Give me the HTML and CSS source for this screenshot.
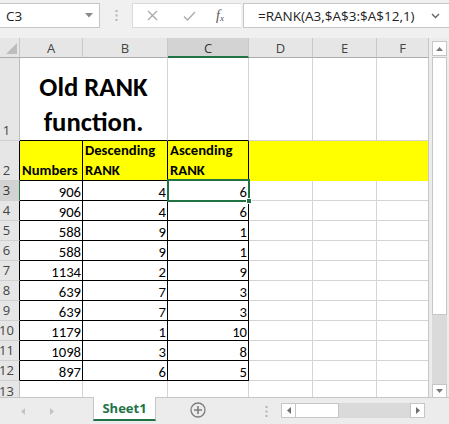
FILE: index.html
```html
<!DOCTYPE html>
<html>
<head>
<meta charset="utf-8">
<link rel="stylesheet" href="styles.css">
</head>
<body>
<div class="app">
  <div class="fbar">
    <div class="namebox"><span>C3</span><svg class="caret" width="8" height="5" viewBox="0 0 8 5"><path d="M0 0 L8 0 L4 4.5 Z" fill="#8a8a8a"/></svg></div>
    <div class="dots"><svg width="3" height="11" viewBox="0 0 3 11"><rect x="0.5" y="0" width="2" height="2" fill="#b4b4b4"/><rect x="0.5" y="4.5" width="2" height="2" fill="#b4b4b4"/><rect x="0.5" y="9" width="2" height="2" fill="#b4b4b4"/></svg></div>
    <div class="fbtns">
      <span class="ib ix"><svg width="11" height="11" viewBox="0 0 11 11"><path d="M1 1 L10 10 M10 1 L1 10" stroke="#a9a9a9" stroke-width="1.3" fill="none"/></svg></span>
      <span class="ib ick"><svg width="13" height="10" viewBox="0 0 13 10"><path d="M1 5.5 L4.5 9 L12 1" stroke="#a9a9a9" stroke-width="1.3" fill="none"/></svg></span>
      <span class="fx"><i>f</i><sub>x</sub></span>
    </div>
    <div class="formula"><span>=RANK(A3,$A$3:$A$12,1)</span><svg width="9" height="6" viewBox="0 0 9 6"><path d="M1 1 L4.5 4.5 L8 1" stroke="#666" stroke-width="1.4" fill="none"/></svg></div>
  </div>

  <div class="main">
    <div class="sheet">
      <div class="corner"><svg width="11" height="11" viewBox="0 0 11 11"><path d="M11 0 L11 11 L0 11 Z" fill="#bdbdbd"/></svg></div>
      <div class="ch">A</div><div class="ch">B</div><div class="ch sel">C</div><div class="ch">D</div><div class="ch">E</div><div class="ch last">F</div>

      <div class="rh">1</div>
      <div class="c title bkb">Old RANK function.</div>
      <div class="c bkb"></div><div class="c"></div><div class="c"></div><div class="c last"></div>

      <div class="rh bkr">2</div>
      <div class="c hd yl bk">Numbers</div>
      <div class="c hd yl bk">Descending RANK</div>
      <div class="c hd yl bk">Ascending RANK</div>
      <div class="c yl yb"></div><div class="c yl yb"></div><div class="c yl last ybb"></div>

      <div class="rh rsel">3</div>
      <div class="c n bk">906</div><div class="c n bk">4</div><div class="c n bk active">6<span class="selbox"><span class="handle"></span></span></div><div class="c"></div><div class="c"></div><div class="c last"></div>

      <div class="rh bkr">4</div>
      <div class="c n bk">906</div><div class="c n bk">4</div><div class="c n bk">6</div><div class="c"></div><div class="c"></div><div class="c last"></div>

      <div class="rh bkr">5</div>
      <div class="c n bk">588</div><div class="c n bk">9</div><div class="c n bk">1</div><div class="c"></div><div class="c"></div><div class="c last"></div>

      <div class="rh bkr">6</div>
      <div class="c n bk">588</div><div class="c n bk">9</div><div class="c n bk">1</div><div class="c"></div><div class="c"></div><div class="c last"></div>

      <div class="rh bkr">7</div>
      <div class="c n bk">1134</div><div class="c n bk">2</div><div class="c n bk">9</div><div class="c"></div><div class="c"></div><div class="c last"></div>

      <div class="rh bkr">8</div>
      <div class="c n bk">639</div><div class="c n bk">7</div><div class="c n bk">3</div><div class="c"></div><div class="c"></div><div class="c last"></div>

      <div class="rh bkr">9</div>
      <div class="c n bk">639</div><div class="c n bk">7</div><div class="c n bk">3</div><div class="c"></div><div class="c"></div><div class="c last"></div>

      <div class="rh bkr">10</div>
      <div class="c n bk">1179</div><div class="c n bk">1</div><div class="c n bk">10</div><div class="c"></div><div class="c"></div><div class="c last"></div>

      <div class="rh bkr">11</div>
      <div class="c n bk">1098</div><div class="c n bk">3</div><div class="c n bk">8</div><div class="c"></div><div class="c"></div><div class="c last"></div>

      <div class="rh bkr">12</div>
      <div class="c n bk">897</div><div class="c n bk">6</div><div class="c n bk">5</div><div class="c"></div><div class="c"></div><div class="c last"></div>

      <div class="rh r13">13</div>
      <div class="c nb"></div><div class="c nb"></div><div class="c nb"></div><div class="c nb"></div><div class="c nb"></div><div class="c nb last"></div>
    </div>

    <div class="vscroll">
      <div class="sbtn"><svg width="7" height="4" viewBox="0 0 7 4"><path d="M0 4 L7 4 L3.5 0 Z" fill="#7a7a7a"/></svg></div>
      <div class="vthumb"></div>
      <div class="vtrack"></div>
      <div class="sbtn down"><svg width="7" height="4" viewBox="0 0 7 4"><path d="M0 0 L7 0 L3.5 4 Z" fill="#7a7a7a"/></svg></div>
    </div>
  </div>

  <div class="tabbar">
    <span class="nav first"><svg width="4" height="7" viewBox="0 0 4 7"><path d="M4 0 L4 7 L0 3.5 Z" fill="#c4c4c4"/></svg></span>
    <span class="nav second"><svg width="4" height="7" viewBox="0 0 4 7"><path d="M0 0 L0 7 L4 3.5 Z" fill="#c4c4c4"/></svg></span>
    <div class="tab">Sheet1</div>
    <span class="plus"><svg width="16" height="16" viewBox="0 0 16 16"><circle cx="8" cy="8" r="7" stroke="#7d7d7d" stroke-width="1.3" fill="none"/><path d="M8 4 L8 12 M4 8 L12 8" stroke="#7d7d7d" stroke-width="1.6"/></svg></span>
    <span class="tdots"><svg width="3" height="11" viewBox="0 0 3 11"><rect x="0.5" y="0" width="2" height="2" fill="#b4b4b4"/><rect x="0.5" y="4.5" width="2" height="2" fill="#b4b4b4"/><rect x="0.5" y="9" width="2" height="2" fill="#b4b4b4"/></svg></span>
    <div class="hscroll">
      <div class="hbtn"><svg width="4" height="7" viewBox="0 0 4 7"><path d="M4 0 L4 7 L0 3.5 Z" fill="#6f6f6f"/></svg></div>
      <div class="hthumb"></div>
      <div class="htrack"></div>
      <div class="hbtn"><svg width="4" height="7" viewBox="0 0 4 7"><path d="M0 0 L0 7 L4 3.5 Z" fill="#6f6f6f"/></svg></div>
    </div>
  </div>
</div>
</body>
</html>
```

FILE: styles.css
```css
* { box-sizing: border-box; margin: 0; padding: 0; }
html, body { margin: 0; }
body {
  width: 449px;
  height: 424px;
  overflow: hidden;
  background: #f0f0f0;
  font-family: "Open Sans", "Noto Sans", sans-serif;
  color: #222;
}
.app { width: 449px; height: 424px; display: flex; flex-direction: column; }

/* formula bar */
.fbar { height: 38px; display: flex; align-items: flex-start; padding-top: 3px; }
.namebox {
  width: 100px; height: 25px; background: #fff;
  border: 1px solid #c6c6c6; border-left: none;
  display: flex; align-items: center; justify-content: space-between;
  padding: 0 6px 0 6px; font-size: 13.5px; color: #222;
}
.dots { width: 32px; height: 25px; display: flex; align-items: center; justify-content: center; }
.fbtns {
  width: 109px; height: 25px; background: #fff;
  border: 1px solid #dadada; border-right: none;
  display: flex; align-items: center;
}
.ib { display: flex; align-items: center; justify-content: center; width: 16px; height: 16px; }
.ix { margin-left: 11px; }
.ick { margin-left: 21px; }
.fx {
  margin-left: 19px; font-family: "Liberation Serif", serif; font-size: 14px; color: #555;
  display: flex; align-items: baseline;
}
.fx i { font-style: italic; }
.fx sub { font-size: 9px; font-style: italic; vertical-align: baseline; position: relative; top: 1px; }
.formula {
  flex: 1; height: 25px; margin-left: 2px; background: #fff;
  border: 1px solid #c6c6c6; border-right: none;
  display: flex; align-items: center; justify-content: space-between;
  padding: 0 9px 0 14px; font-size: 13.5px; color: #222;
}

/* main area */
.main { display: flex; height: 359px; }
.sheet {
  width: 429px;
  display: grid;
  grid-template-columns: 20px 63px 85px 81px 64px 64px 52px;
  grid-template-rows: 20px 83px 40px repeat(10, 20px) 16px;
  background: #fff;
  overflow: hidden;
}
.corner {
  background: #e6e6e6; border-right: 1px solid #c6c6c6; border-bottom: 1px solid #ababab;
  display: flex; align-items: flex-end; justify-content: flex-end; padding: 0 2px 3px 0;
}
.ch {
  background: #e6e6e6; border-right: 1px solid #c9c9c9; border-bottom: 1px solid #ababab;
  display: flex; align-items: center; justify-content: center;
  font-size: 13px; color: #444; padding-top: 1px;
}
.ch.sel { background: #d3d3d3; border-bottom: 2px solid #217346; color: #333; }
.ch.last { border-right: 1px solid #c6c6c6; }
.rh {
  background: #e6e6e6; border-right: 1px solid #bdbdbd; border-bottom: 1px solid #d0d0d0;
  display: flex; align-items: flex-end; justify-content: center;
  padding: 0 6px 1px 0; font-size: 13px; color: #444; line-height: 18px;
}
.rh.bkr { border-right-color: #000; }
.rh.rsel { background: #d3d3d3; border-right: 1px solid #217346; color: #333; }
.rh.r13 { border-bottom: none; align-items: flex-start; padding-top: 1px; }

.c {
  border-right: 1px solid #d4d4d4; border-bottom: 1px solid #d4d4d4;
  font-family: "Carlito", "Lato", sans-serif; font-size: 14.67px; color: #000;
  display: flex; align-items: flex-end; padding: 0 2px 0 2px; line-height: 18px;
}
.c.last { border-right-color: #c6c6c6; }
.c.nb { border-bottom: none; }
.c.bk { border-right-color: #000; border-bottom-color: #000; }
.c.bkb { border-bottom-color: #000; }
.c.n { justify-content: flex-end; padding-right: 1px; line-height: 15px; }
.c.yl { background: #ffff00; }
.c.yb { border-right-color: #ffff00; border-bottom-color: #ffff00; }
.c.ybb { border-bottom-color: #ffff00; }
.c.hd { font-weight: 700; line-height: 20px; padding-left: 2px; }
.c.title {
  grid-column: span 2;
  font-weight: 700; font-size: 26.7px; line-height: 35px;
  justify-content: center; text-align: center; padding: 0 12px 0 12px;
}
.c.active { position: relative; }
.selbox {
  position: absolute; left: -1px; top: -2px; right: -2px; bottom: -2px;
  border: 2px solid #217346; z-index: 2;
}
.handle {
  position: absolute; right: -4px; bottom: -4px; width: 6px; height: 6px;
  background: #217346; border: 1px solid #fff;
}

/* vertical scrollbar */
.vscroll {
  width: 20px; background: #ececec;
  display: flex; flex-direction: column; padding: 3px 2px 0 3px;
}
.sbtn {
  height: 15px; background: #fff; border: 1px solid #c6c6c6;
  display: flex; align-items: center; justify-content: center; flex: none;
}
.sbtn.down { height: 13px; border-bottom: none; }
.vthumb { height: 258px; margin-top: 1px; background: #fff; border: 1px solid #c6c6c6; flex: none; }
.vtrack { flex: 1; background: #dadada; }

/* tab bar */
.tabbar {
  height: 27px; background: #ececec; border-top: 1px solid #c6c6c6;
  display: flex; align-items: flex-start;
}
.nav { display: flex; align-items: center; height: 25px; width: 4px; margin-top: 1px; }
.nav.first { margin-left: 21px; }
.nav.second { margin-left: 25px; }
.tab {
  margin-left: 39px; margin-top: -1px; width: 63px; height: 24px;
  background: #fff; border-left: 1px solid #c6c6c6; border-right: 1px solid #c6c6c6;
  border-bottom: 2px solid #217346;
  display: flex; align-items: center; justify-content: center;
  font-family: "Open Sans", sans-serif; font-weight: 700; font-size: 13px; color: #217346;
  padding-bottom: 1px;
}
.plus { margin-left: 34px; margin-top: 4px; display: flex; }
.tdots { margin-left: 59px; margin-top: 8px; display: flex; }
.hscroll { margin-left: 13px; margin-top: 5px; display: flex; height: 15px; width: 144px; }
.hbtn {
  width: 15px; height: 15px; background: #fff; border: 1px solid #c6c6c6;
  display: flex; align-items: center; justify-content: center; flex: none;
}
.hthumb { width: 43px; height: 15px; background: #fff; border: 1px solid #c6c6c6; border-left: none; flex: none; }
.htrack { flex: 1; background: #dadada; }
```
